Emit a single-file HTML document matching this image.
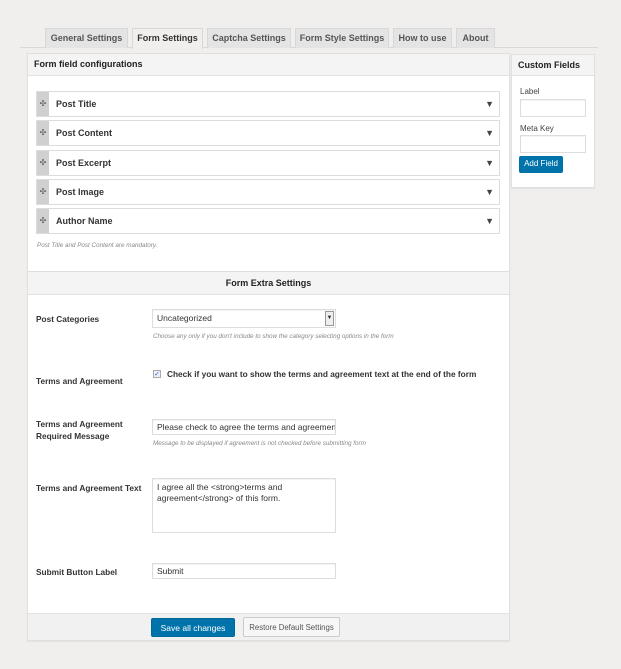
<!DOCTYPE html>
<html><head><meta charset="utf-8">
<style>
*{box-sizing:border-box;margin:0;padding:0}
body{width:621px;height:669px;background:#f1efee;font-family:"Liberation Sans",sans-serif;color:#333;position:relative;overflow:hidden}
.a{position:absolute}
.tab{position:absolute;top:28px;height:20px;background:#e4e4e4;border:1px solid #d8d8d8;border-bottom:none;font-size:9px;font-weight:bold;color:#555;text-align:center;line-height:19px;white-space:nowrap}
.tab.on{background:#f1efee;color:#333;height:21px}
.panel{background:#fff;border:1px solid #e0e0e0;box-shadow:0 1px 1px rgba(0,0,0,.06)}
.hdr{background:#f4f4f4;border-bottom:1px solid #e2e2e2;font-size:9px;font-weight:bold;color:#222}
.row{position:absolute;left:36px;width:464px;height:26px;border:1px solid #dcdcdc;background:#fff}
.row .h{position:absolute;left:0;top:0;width:12px;height:24px;background:#d0d0d0;font-size:8px;color:#555;text-align:center;line-height:24px}
.row .t{position:absolute;left:19px;top:0;line-height:24px;font-size:9px;font-weight:bold;color:#333}
.row .ar{position:absolute;right:5px;top:0;line-height:24px;font-size:9px;color:#444}
.lbl{position:absolute;left:36px;font-size:8.3px;font-weight:bold;color:#333;line-height:12px}
.inp{position:absolute;background:#fff;border:1px solid #ddd;box-shadow:inset 0 1px 1px rgba(0,0,0,.05);font-size:8.5px;color:#333;padding-left:4px;white-space:nowrap;overflow:hidden}
.note{position:absolute;font-size:6.3px;font-style:italic;color:#888}
.btn{position:absolute;font-size:8.5px;text-align:center}
</style></head><body>
<div class="a" style="left:20px;top:47px;width:578px;height:1px;background:#d8d8d8"></div>
<div class="tab" style="left:45px;width:83px">General Settings</div>
<div class="tab on" style="left:132px;width:71px">Form Settings</div>
<div class="tab" style="left:207px;width:84px">Captcha Settings</div>
<div class="tab" style="left:295px;width:94px">Form Style Settings</div>
<div class="tab" style="left:393px;width:59px">How to use</div>
<div class="tab" style="left:456px;width:39px">About</div>

<div class="a panel" style="left:27px;top:53px;width:483px;height:588px"></div>
<div class="a hdr" style="left:28px;top:54px;width:481px;height:22px;line-height:21px;padding-left:6px">Form field configurations</div>

<div class="row" style="top:91px"><div class="h">✣</div><div class="t">Post Title</div><div class="ar">▼</div></div>
<div class="row" style="top:120px"><div class="h">✣</div><div class="t">Post Content</div><div class="ar">▼</div></div>
<div class="row" style="top:150px"><div class="h">✣</div><div class="t">Post Excerpt</div><div class="ar">▼</div></div>
<div class="row" style="top:179px"><div class="h">✣</div><div class="t">Post Image</div><div class="ar">▼</div></div>
<div class="row" style="top:208px"><div class="h">✣</div><div class="t">Author Name</div><div class="ar">▼</div></div>
<div class="note" style="left:37px;top:242px">Post Title and Post Content are mandatory.</div>

<div class="a hdr" style="left:28px;top:271px;width:481px;height:24px;line-height:23px;text-align:center;border-top:1px solid #dedede">Form Extra Settings</div>

<div class="lbl" style="top:313px">Post Categories</div>
<div class="inp" style="left:152px;top:309px;width:184px;height:19px;line-height:17px">Uncategorized<span style="position:absolute;right:1px;top:1px;width:9px;height:15px;border:1px solid #999;background:#eee;font-size:6px;text-align:center;line-height:13px;padding:0">▼</span></div>
<div class="note" style="left:153px;top:333px">Choose any only if you don't include to show the category selecting options in the form</div>

<div class="lbl" style="top:375px">Terms and Agreement</div>
<div class="a" style="left:153px;top:370px;width:8px;height:8px;border:1px solid #aaa;background:#eef;font-size:7px;line-height:7px;color:#2a6fa8;text-align:center">✓</div>
<div class="a" style="left:167px;top:369px;font-size:8.3px;font-weight:bold;color:#333">Check if you want to show the terms and agreement text at the end of the form</div>

<div class="lbl" style="top:418px">Terms and Agreement<br>Required Message</div>
<div class="inp" style="left:152px;top:419px;width:184px;height:16px;line-height:14px">Please check to agree the terms and agreement</div>
<div class="note" style="left:153px;top:440px">Message to be displayed if agreement is not checked before submitting form</div>

<div class="lbl" style="top:482px">Terms and Agreement Text</div>
<div class="inp" style="left:152px;top:478px;width:184px;height:55px;line-height:11px;padding-top:3px;white-space:normal">I agree all the &lt;strong&gt;terms and agreement&lt;/strong&gt; of this form.</div>

<div class="lbl" style="top:566px">Submit Button Label</div>
<div class="inp" style="left:152px;top:563px;width:184px;height:16px;line-height:14px">Submit</div>

<div class="a" style="left:28px;top:613px;width:481px;height:27px;background:#f1f1f1;border-top:1px solid #e2e2e2"></div>
<div class="btn" style="left:151px;top:618px;width:84px;height:19px;line-height:19px;background:#0073aa;color:#fff;border-radius:2px;border:1px solid #006799">Save all changes</div>
<div class="btn" style="left:243px;top:617px;width:97px;height:20px;line-height:19px;background:#f7f7f7;color:#555;border:1px solid #ccc;border-radius:2px;font-size:7.8px">Restore Default Settings</div>

<div class="a panel" style="left:511px;top:54px;width:84px;height:134px"></div>
<div class="a hdr" style="left:512px;top:55px;width:82px;height:21px;line-height:20px;padding-left:6px">Custom Fields</div>
<div class="a" style="left:520px;top:87px;font-size:8px;color:#444">Label</div>
<div class="inp" style="left:520px;top:99px;width:66px;height:18px"></div>
<div class="a" style="left:520px;top:124px;font-size:8px;color:#444">Meta Key</div>
<div class="inp" style="left:520px;top:135px;width:66px;height:18px"></div>
<div class="btn" style="left:519px;top:156px;width:44px;height:17px;line-height:16px;background:#0073aa;color:#fff;border-radius:2px;font-size:8px">Add Field</div>
</body></html>
